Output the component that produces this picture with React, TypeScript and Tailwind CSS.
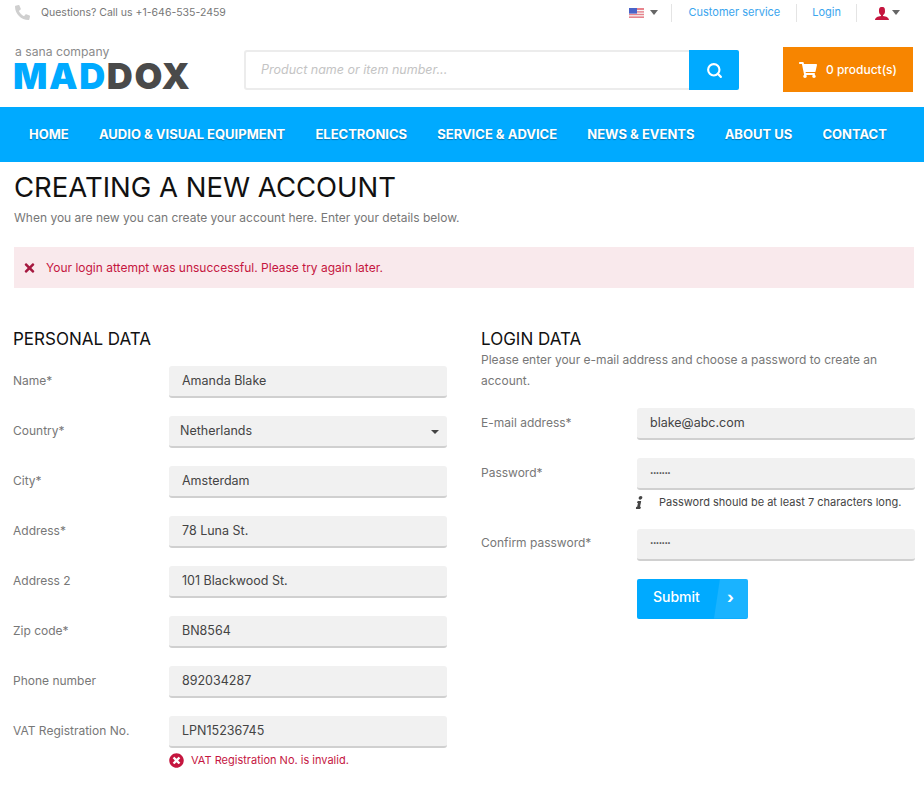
import { Search } from 'lucide-react';
import { FaInfo, FaPhone, FaShoppingCart, FaTimes, FaTimesCircle } from 'react-icons/fa';
import { ImUser } from 'react-icons/im';

const navItems = [
    'HOME',
    'AUDIO & VISUAL EQUIPMENT',
    'ELECTRONICS',
    'SERVICE & ADVICE',
    'NEWS & EVENTS',
    'ABOUT US',
    'CONTACT',
];

const personalFields = [
    { label: 'Name*', value: 'Amanda Blake' },
    { label: 'Country*', value: 'Netherlands', select: true },
    { label: 'City*', value: 'Amsterdam' },
    { label: 'Address*', value: '78 Luna St.' },
    { label: 'Address 2', value: '101 Blackwood St.' },
    { label: 'Zip code*', value: 'BN8564' },
    { label: 'Phone number', value: '892034287' },
    { label: 'VAT Registration No.', value: 'LPN15236745' },
];

const inputClass =
    'h-[32px] w-full rounded-[3px] border-b-2 border-[#d0d0d0] bg-[#f1f1f1] px-[13px] pb-[2px] text-[12.5px] text-[#444] outline-none';

const labelClass = 'w-[156px] shrink-0 pb-[3px] text-[12px] text-[#777]';

const Caret = () => (
    <span className="inline-block h-0 w-0 border-x-[4.5px] border-t-[5px] border-x-transparent border-t-[#666]" />
);

const UsFlag = () => (
    <svg width="15" height="10" viewBox="0 0 15 10">
        <rect width="15" height="10" fill="#e8838c" />
        <rect y="2" width="15" height="1.2" fill="#f6f6f6" />
        <rect y="4.6" width="15" height="1.2" fill="#f6f6f6" />
        <rect y="7.2" width="15" height="1.2" fill="#f6f6f6" />
        <rect width="8" height="5.6" fill="#4a63c8" />
    </svg>
);

const Field = ({ label, value, select }: { label: string; value: string; select?: boolean }) => (
    <div className="flex items-center">
        <label className={labelClass}>{label}</label>
        {select ? (
            <div className="relative w-[278px]">
                <select
                    defaultValue={value}
                    className="h-[32px] w-full appearance-none rounded-[3px] border-b-2 border-[#d0d0d0] bg-[#f1f1f1] px-[11px] text-[12.5px] text-[#444] outline-none"
                >
                    <option>{value}</option>
                </select>
                <span className="absolute right-[8px] top-[14px] flex">
                    <span className="inline-block h-0 w-0 border-x-[4px] border-t-[4px] border-x-transparent border-t-[#444]" />
                </span>
            </div>
        ) : (
            <div className="w-[278px]">
                <input readOnly value={value} className={inputClass} />
            </div>
        )}
    </div>
);

const PasswordInput = () => (
    <input
        readOnly
        type="password"
        value="1234567"
        className="h-[32px] w-full rounded-[3px] border-b-2 border-[#d0d0d0] bg-[#f1f1f1] px-[13px] pb-[2px] text-[6px] tracking-[-0.5px] text-[#444] outline-none"
    />
);

export default function App() {
    return (
        <div className="h-[786px] w-[924px] overflow-hidden bg-white font-['Inter',sans-serif] text-[#777]">
            <div className="flex h-[25px] items-center justify-between pl-[15px] pr-[24px]">
                <div className="flex items-center gap-[11px]">
                    <FaPhone className="h-[15px] w-[15px] -scale-x-100 text-[#cfcfcf]" />
                    <span className="text-[10.5px] text-[#777]">Questions? Call us +1-646-535-2459</span>
                </div>
                <div className="flex items-center text-[11px] text-[#3aa5ee]">
                    <UsFlag />
                    <span className="ml-[6px] mr-[13px] flex">
                        <Caret />
                    </span>
                    <span className="h-[18px] w-px bg-[#e4e4e4]" />
                    <a className="mx-[16px]">Customer service</a>
                    <span className="h-[18px] w-px bg-[#e4e4e4]" />
                    <a className="mx-[15px]">Login</a>
                    <span className="h-[18px] w-px bg-[#e4e4e4]" />
                    <ImUser className="ml-[17px] h-[16px] w-[16px] text-[#c5163f]" />
                    <span className="ml-[2px] flex">
                        <Caret />
                    </span>
                </div>
            </div>

            <div className="flex h-[82px] items-start pl-[14px] pr-[11px]">
                <div className="mt-[20px] w-[230px] shrink-0">
                    <div className="pl-[1px] text-[12.2px] leading-[14px] text-[#8a8a8a]">a sana company</div>
                    <div className="-ml-[1px] mt-[2px] whitespace-nowrap text-[36px] font-black leading-[30px] tracking-[1.6px]">
                        <span className="text-[#00aaff]">MAD</span>
                        <span className="text-[#4a4a4a]">DOX</span>
                    </div>
                </div>
                <div className="mt-[25px] flex h-[40px] w-[495px] shrink-0">
                    <input
                        readOnly
                        placeholder="Product name or item number..."
                        className="h-full min-w-0 flex-1 rounded-l-[3px] border-2 border-r-0 border-[#ececec] px-[15px] pb-[2px] text-[12.5px] italic outline-none placeholder:text-[#c4c4c4]"
                    />
                    <button className="flex w-[50px] items-center justify-center rounded-r-[2px] bg-[#00aaff]">
                        <Search className="h-[17px] w-[17px] text-white" strokeWidth={3} />
                    </button>
                </div>
                <button className="ml-auto mt-[22px] flex h-[45px] w-[130px] items-center justify-center gap-[9px] bg-[#f78500] text-[12px] font-medium text-white">
                    <FaShoppingCart className="h-[18px] w-[18px]" />
                    0 product(s)
                </button>
            </div>

            <nav className="flex h-[55px] items-center justify-between bg-[#00aaff] pl-[29px] pr-[37px] pt-[1px]">
                {navItems.map((item) => (
                    <a key={item} className="text-[13px] font-bold text-white [text-shadow:0_1px_1px_rgba(0,0,0,0.3)]">
                        {item}
                    </a>
                ))}
            </nav>

            <div className="pl-[14px] pr-[10px]">
                <h1 className="mt-[9px] text-[27.5px] font-normal leading-[32px] text-[#111]">CREATING A NEW ACCOUNT</h1>
                <p className="mt-[6px] text-[12px] leading-[18px] text-[#777]">
                    When you are new you can create your account here. Enter your details below.
                </p>
                <div className="mt-[20px] flex h-[41px] items-center gap-[10px] bg-[#f9e9ec] pl-[9px] text-[12px] text-[#c5163f]">
                    <FaTimes className="h-[14px] w-[13px] text-[#a5183f]" />
                    Your login attempt was unsuccessful. Please try again later.
                </div>
            </div>

            <div className="mt-[41px] flex pl-[13px]">
                <section className="w-[434px]">
                    <h2 className="text-[17px] font-normal leading-[20px] text-[#111]">PERSONAL DATA</h2>
                    <div className="mt-[17px] flex flex-col gap-[18px]">
                        {personalFields.map((field) => (
                            <Field key={field.label} {...field} />
                        ))}
                    </div>
                    <div className="ml-[156px] mt-[4px] flex items-center gap-[7px] text-[11px] text-[#c5163f]">
                        <FaTimesCircle className="h-[15px] w-[15px]" />
                        VAT Registration No. is invalid.
                    </div>
                </section>

                <section className="ml-[34px] w-[434px]">
                    <h2 className="text-[17px] font-normal leading-[20px] text-[#111]">LOGIN DATA</h2>
                    <p className="text-[12px] leading-[21px] text-[#777]">
                        Please enter your e-mail address and choose a password to create an account.
                    </p>
                    <div className="mt-[17px] flex items-center">
                        <label className={labelClass}>E-mail address*</label>
                        <input readOnly value="blake@abc.com" className={inputClass} />
                    </div>
                    <div className="mt-[18px] flex items-center">
                        <label className={labelClass}>Password*</label>
                        <PasswordInput />
                    </div>
                    <div className="ml-[156px] mt-[4px] flex items-center gap-[17px] text-[11px] text-[#444]">
                        <FaInfo className="h-[13px] w-[5px] -skew-x-12 text-[#444]" />
                        Password should be at least 7 characters long.
                    </div>
                    <div className="mt-[18px] flex items-center">
                        <label className={labelClass}>Confirm password*</label>
                        <PasswordInput />
                    </div>
                    <button className="relative ml-[156px] mt-[18px] flex h-[40px] w-[111px] items-center overflow-hidden rounded-[2px] bg-[#00aaff] pb-[4px] pl-[16px] text-[14px] font-medium text-white">
                        Submit
                        <span className="absolute right-0 top-0 flex h-full w-[34px] items-center justify-center bg-white/10 pb-[3px] pr-[1px] text-[16px] font-bold [clip-path:polygon(6px_0,100%_0,100%_100%,0_100%)]">
                            ›
                        </span>
                    </button>
                </section>
            </div>
        </div>
    );
}
